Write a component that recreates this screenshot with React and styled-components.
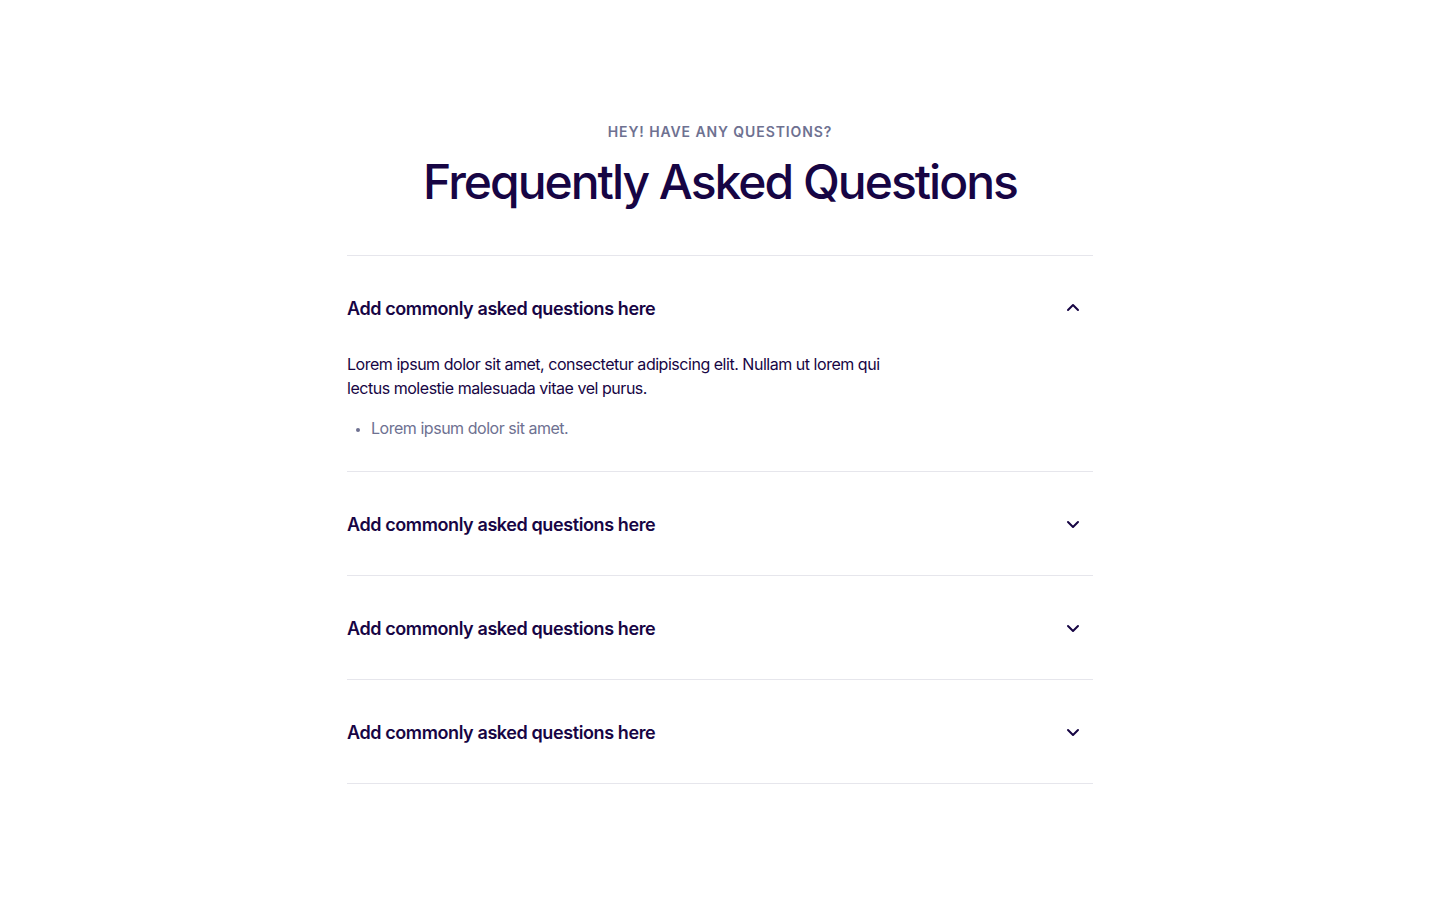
import { useState } from "react";
import styled, { createGlobalStyle } from "styled-components";

const GlobalStyle = createGlobalStyle`
  * { box-sizing: border-box; }
  body {
    margin: 0;
    background: #fff;
    font-family: Inter, "Liberation Sans", sans-serif;
    -webkit-font-smoothing: antialiased;
  }
`;

const Page = styled.main`
  display: flex;
  justify-content: center;
  padding: 122px 20px 100px;
`;

const Section = styled.section`
  width: 746px;
  display: flex;
  flex-direction: column;
`;

const Eyebrow = styled.p`
  margin: 0;
  text-align: center;
  color: #6e7191;
  font-size: 14px;
  line-height: 20px;
  font-weight: 600;
  letter-spacing: 0.9px;
  text-transform: uppercase;
`;

const Title = styled.h1`
  margin: 10px 0 43px;
  text-align: center;
  color: #170544;
  font-size: 48px;
  line-height: 60px;
  font-weight: 500;
  letter-spacing: -2px;
`;

const List = styled.div`
  border-top: 1px solid #e6e6ec;
`;

const Item = styled.div`
  border-bottom: 1px solid #e6e6ec;
`;

const Header = styled.button`
  width: 100%;
  display: flex;
  align-items: center;
  justify-content: space-between;
  padding: 41px 8px ${({ $open }) => ($open ? "31px" : "38px")} 0;
  border: 0;
  background: none;
  cursor: pointer;
  font-family: inherit;
  text-align: left;
`;

const Question = styled.span`
  color: #170544;
  font-size: 18px;
  line-height: 24px;
  font-weight: 600;
  letter-spacing: -0.4px;
`;

const Chevron = styled.svg`
  width: 24px;
  height: 24px;
  flex-shrink: 0;
  margin-top: -2px;
  transform: rotate(${({ $open }) => ($open ? "180deg" : "0deg")});
`;

const Answer = styled.div`
  padding: 0 0 31px;
  max-width: 545px;
`;

const Paragraph = styled.p`
  margin: 0;
  color: #170544;
  font-size: 16px;
  line-height: 24px;
  letter-spacing: -0.47px;
`;

const Bullets = styled.ul`
  margin: 16px 0 0;
  padding-left: 24px;
  color: #6e7191;
  font-size: 16px;
  line-height: 24px;
  letter-spacing: -0.47px;
  li::marker {
    font-size: 12px;
  }
`;

const items = [
  {
    q: "Add commonly asked questions here",
    a: "Lorem ipsum dolor sit amet, consectetur adipiscing elit. Nullam ut lorem qui lectus molestie malesuada vitae vel purus.",
    bullets: ["Lorem ipsum dolor sit amet."],
  },
  { q: "Add commonly asked questions here", a: "", bullets: [] },
  { q: "Add commonly asked questions here", a: "", bullets: [] },
  { q: "Add commonly asked questions here", a: "", bullets: [] },
];

const FaqItem = ({ item, open, onToggle }) => (
  <Item>
    <Header $open={open} onClick={onToggle}>
      <Question>{item.q}</Question>
      <Chevron $open={open} viewBox="0 0 24 24" fill="none">
        <path
          d="M7 10l5 5 5-5"
          stroke="#170544"
          strokeWidth="2"
          strokeLinecap="round"
          strokeLinejoin="round"
        />
      </Chevron>
    </Header>
    {open && (
      <Answer>
        <Paragraph>{item.a}</Paragraph>
        {item.bullets.length > 0 && (
          <Bullets>
            {item.bullets.map((b, i) => (
              <li key={i}>{b}</li>
            ))}
          </Bullets>
        )}
      </Answer>
    )}
  </Item>
);

export default function App() {
  const [openIndex, setOpenIndex] = useState(0);
  return (
    <>
      <GlobalStyle />
      <Page>
        <Section>
          <Eyebrow>Hey! Have any questions?</Eyebrow>
          <Title>Frequently Asked Questions</Title>
          <List>
            {items.map((item, i) => (
              <FaqItem
                key={i}
                item={item}
                open={openIndex === i}
                onToggle={() => setOpenIndex(openIndex === i ? -1 : i)}
              />
            ))}
          </List>
        </Section>
      </Page>
    </>
  );
}
